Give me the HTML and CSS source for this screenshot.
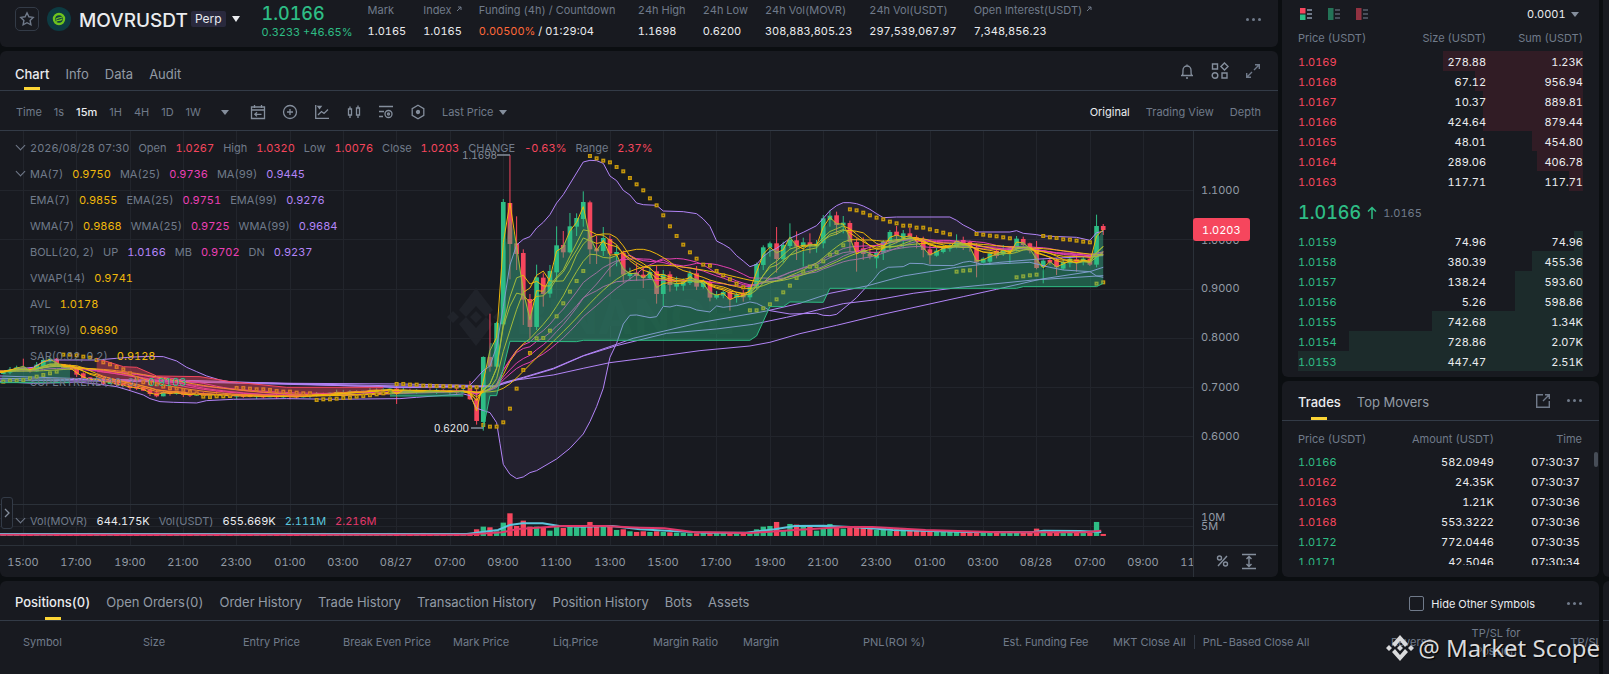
FILE: index.html
```html
<!DOCTYPE html>
<html lang="en">
  <head>
    <meta charset="utf-8">
    <title>MOVRUSDT Perp</title>
    <link rel="stylesheet" href="styles.css">
  </head>
  <body>
    <div class="layout">

      <div class="col-main">
        <header class="panel ticker">
          <button class="star" type="button" aria-label="Favorite">
            <svg width="16" height="16" viewBox="0 0 16 16"><path d="M8 1.800l1.900 4 4.300.6-3.100 3 .8 4.400L8 11.700l-3.900 2.100.8-4.400-3.100-3 4.300-.6z" fill="none" stroke="#707a8a" stroke-width="1.400"/></svg>
          </button>
          <svg class="coin" width="24" height="24" viewBox="0 0 24 24">
            <circle cx="12" cy="12" r="12" fill="#0d3b42"/>
            <circle cx="12" cy="12" r="5" fill="none" stroke="#6fc41e" stroke-width="2.400"/>
            <path d="M9 12.500c1-2.500 3-1 6-2.500M9 14.500c2-2 4 0 6-2.500" fill="none" stroke="#6fc41e" stroke-width="1.300"/>
          </svg>
          <h1>MOVRUSDT</h1>
          <span class="perp">Perp</span>
          <span class="caret big"></span>
          <div class="last">
            <div class="last-price">1.0166</div>
            <div class="last-change">0.3233 +46.65%</div>
          </div>
          <dl class="stats">
            <div><dt>Mark</dt><dd>1.0165</dd></div>
            <div><dt>Index <svg width="6" height="6" viewBox="0 0 6 6"><path d="M1 5l4-4M2 1h3v3" fill="none" stroke="#707a8a"/></svg></dt><dd>1.0165</dd></div>
            <div class="funding"><dt>Funding (4h) / Countdown</dt><dd><span class="orange">0.00500%</span> / 01:29:04</dd></div>
            <div><dt>24h High</dt><dd>1.1698</dd></div>
            <div><dt>24h Low</dt><dd>0.6200</dd></div>
            <div><dt>24h Vol(MOVR)</dt><dd>308,883,805.23</dd></div>
            <div><dt>24h Vol(USDT)</dt><dd>297,539,067.97</dd></div>
            <div><dt>Open Interest(USDT) <svg width="6" height="6" viewBox="0 0 6 6"><path d="M1 5l4-4M2 1h3v3" fill="none" stroke="#707a8a"/></svg></dt><dd>7,348,856.23</dd></div>
          </dl>
          <button class="dots" type="button" aria-label="More"><i></i><i></i><i></i></button>
        </header>

        <section class="panel chart">
          <nav class="tabs">
            <button class="tab active" type="button">Chart</button>
            <button class="tab" type="button">Info</button>
            <button class="tab" type="button">Data</button>
            <button class="tab" type="button">Audit</button>
            <div class="tab-icons">
              <button type="button" aria-label="Alerts"><svg width="16" height="16" viewBox="0 0 16 16"><path d="M2 12.500h12M3.500 12.500c.5-1 .5-3 .5-5.500a4 4 0 0 1 8 0c0 2.500 0 4.500.5 5.500M7 15h2M8 1.500V3" fill="none" stroke="#848e9c" stroke-width="1.300"/></svg></button>
              <button type="button" aria-label="Layout"><svg width="18" height="18" viewBox="0 0 18 18" fill="none" stroke="#848e9c" stroke-width="1.400"><path d="M1.500 2h5v5h-5zM11 11h5v5h-5zM13.500.9l3.600 3.600-3.600 3.600-3.600-3.600z"/><circle cx="4" cy="13.500" r="2.800"/></svg></button>
              <button type="button" aria-label="Expand"><svg width="16" height="16" viewBox="0 0 16 16" fill="none" stroke="#707a8a" stroke-width="1.400"><path d="M9 7l5-5M10 1.700h4.300V6M7 9l-5 5M1.700 10v4.300H6"/></svg></button>
            </div>
          </nav>
          <div class="toolbar">
            <span>Time</span>
            <button type="button">1s</button>
            <button class="active" type="button">15m</button>
            <button type="button">1H</button>
            <button type="button">4H</button>
            <button type="button">1D</button>
            <button type="button">1W</button>
            <span class="caret more"></span>
            <div class="tools">
              <svg width="16" height="16" viewBox="0 0 16 16"><path d="M1.500 3h13v11.500h-13zM1.500 6h13M4.500 1v3M11.500 1v3M11.500 10.300H5M7 8.200l-2.200 2.100L7 12.400"/></svg>
              <svg width="16" height="16" viewBox="0 0 16 16"><circle cx="8" cy="8" r="6.500"/><path d="M8 5v6M5 8h6"/></svg>
              <svg width="16" height="16" viewBox="0 0 16 16"><path d="M1.700 1v13.300H15M4 11l3.500-3.500 2.500 2 4-4M4 2.500h3L5.500 4.500z"/></svg>
              <svg width="16" height="16" viewBox="0 0 16 16"><path d="M2.500 5h3v6h-3zM10.500 4h3v7h-3zM4 2.500V5M4 11v3M12 1.500V4M12 11v3"/></svg>
              <svg width="16" height="16" viewBox="0 0 16 16"><path d="M1 2.500h14M1 7.500h5M1 12.500h4"/><circle cx="10.500" cy="10" r="3.500"/><circle cx="10.500" cy="10" r="1"/></svg>
              <svg width="16" height="16" viewBox="0 0 16 16"><path d="M8 1.200l5.800 3.400v6.800L8 14.800l-5.800-3.400V4.600z"/><circle cx="8" cy="8" r="1.500" fill="#848e9c"/></svg>
            </div>
            <label class="drop"><select aria-label="Price type"><option>Last Price</option></select><span class="caret"></span></label>
            <div class="views">
              <button class="current" type="button">Original</button>
              <button type="button">Trading View</button>
              <button type="button">Depth</button>
            </div>
          </div>

          <div class="canvas">
            <svg class="plot" viewBox="0 0 1278 446">
              <defs>
                <clipPath id="timeClip"><rect x="0" y="415" width="1193" height="31"/></clipPath>
              </defs>
              <g id="grid" stroke="#22252c" stroke-width="1"></g>
              <g class="brand">
                <g transform="translate(476 186)">
                  <path d="M-17 -7L0 -29 17 -7 10 0 0 -11 -10 0zM-17 7L0 29 17 7 10 0 0 11 -10 0zM0 -6l6 6-6 6-6-6zM-23 -6l6 6-6 6-6-6zM23 -6l6 6-6 6-6-6z"/>
                </g>
                <text x="516" y="203">BINANCE</text>
              </g>
              <!-- series coordinates are in thirds of a pixel -->
              <g id="series" transform="translate(0 -1) scale(.3333)"></g>
              <g stroke="#2b3139">
                <path d="M0 373.500H1278M0 414.500H1278M1193.500 0V446"/>
              </g>
              <g stroke="#848e9c" stroke-width="1.500"><path d="M497 24h13M471 297h12"/></g>
              <text class="mark dim" x="462" y="28">1.1698</text>
              <text class="mark" x="434" y="301">0.6200</text>
              <g class="axis">
                <text x="1201" y="63">1.1000</text>
                <text x="1201" y="113">1.0000</text>
                <text x="1201" y="161">0.9000</text>
                <text x="1201" y="210">0.8000</text>
                <text x="1201" y="260">0.7000</text>
                <text x="1201" y="309">0.6000</text>
                <text x="1201" y="390">10M</text>
                <text x="1201" y="399">5M</text>
              </g>
              <rect x="1193" y="87" width="57" height="23" rx="3" fill="#f6465d"/>
              <text class="tag" x="1202" y="103">1.0203</text>
              <g id="times" class="axis" text-anchor="middle" clip-path="url(#timeClip)"></g>
              <g fill="none" stroke="#848e9c" stroke-width="1.400">
                <path d="M1218 435l9-10"/><circle cx="1219.500" cy="427" r="2"/><circle cx="1225.500" cy="433" r="2"/>
                <path d="M1242 423.500h14M1242 437.500h14M1249 426v9M1246.500 428l2.500-2.500 2.500 2.500M1246.500 433l2.500 2.500 2.500-2.500"/>
              </g>
            </svg>

            <div class="legend">
              <div class="fold">2026/08/28 07:30 <span>Open</span> <b class="down">1.0267</b> <span>High</span> <b class="down">1.0320</b> <span>Low</span> <b class="down">1.0076</b> <span>Close</span> <b class="down">1.0203</b> <span>CHANGE</span> <b class="down">-0.63%</b> <span>Range</span> <b class="down">2.37%</b></div>
              <div class="fold">MA(7) <b class="c1">0.9750</b> <span>MA(25)</span> <b class="c2">0.9736</b> <span>MA(99)</span> <b class="c3">0.9445</b></div>
              <div>EMA(7) <b class="c1">0.9855</b> <span>EMA(25)</span> <b class="c2">0.9751</b> <span>EMA(99)</span> <b class="c3">0.9276</b></div>
              <div>WMA(7) <b class="c1">0.9868</b> <span>WMA(25)</span> <b class="c2">0.9725</b> <span>WMA(99)</span> <b class="c3">0.9684</b></div>
              <div>BOLL(20, 2) <span>UP</span> <b class="c3">1.0166</b> <span>MB</span> <b class="c2">0.9702</b> <span>DN</span> <b class="c3">0.9237</b></div>
              <div>VWAP(14) <b class="c1">0.9741</b></div>
              <div>AVL <b class="c1">1.0178</b></div>
              <div>TRIX(9) <b class="c1">0.9690</b></div>
              <div>SAR(0.02, 0.2) <b class="c1">0.9128</b></div>
              <div>SUPERTREND(10, 3) <b class="up">0.9103</b></div>
            </div>
            <div class="legend volume">
              <div class="fold">Vol(MOVR) <b class="white">644.175K</b> <span>Vol(USDT)</span> <b class="white">655.669K</b> <b class="cyan">2.111M</b> <b class="crimson">2.216M</b></div>
            </div>
            <button class="handle" type="button" aria-label="Show drawing tools"><svg width="6" height="10" viewBox="0 0 6 10"><path d="M1 1l4 4-4 4" fill="none" stroke="#848e9c" stroke-width="1.300"/></svg></button>
          </div>
        </section>
      </div>

      <div class="col-side">
        <section class="panel book">
          <div class="book-top">
            <button type="button" aria-label="Book"><svg width="12" height="12" viewBox="0 0 12 12"><path d="M0 0h5.500v5.500H0z" fill="#f6465d"/><path d="M0 6.500h5.500V12H0z" fill="#2ebd85"/><path d="M7 1h5v2H7zM7 5h5v2H7zM7 9h5v2H7z" fill="#707a8a"/></svg></button>
            <button class="faded" type="button" aria-label="Bids"><svg width="12" height="12" viewBox="0 0 12 12"><path d="M0 0h5.500v12H0z" fill="#2ebd85"/><path d="M7 1h5v2H7zM7 5h5v2H7zM7 9h5v2H7z" fill="#707a8a"/></svg></button>
            <button class="faded" type="button" aria-label="Asks"><svg width="12" height="12" viewBox="0 0 12 12"><path d="M0 0h5.500v12H0z" fill="#f6465d"/><path d="M7 1h5v2H7zM7 5h5v2H7zM7 9h5v2H7z" fill="#707a8a"/></svg></button>
            <label class="drop step"><select aria-label="Price step"><option>0.0001</option></select><span class="caret"></span></label>
          </div>
          <table class="orders asks">
            <thead><tr><th>Price (USDT)</th><th>Size (USDT)</th><th>Sum (USDT)</th></tr></thead>
            <tbody>
              <tr style="--depth: 49%"><td>1.0169</td><td>278.88</td><td>1.23K</td></tr>
              <tr style="--depth: 38%"><td>1.0168</td><td>67.12</td><td>956.94</td></tr>
              <tr style="--depth: 35%"><td>1.0167</td><td>10.37</td><td>889.81</td></tr>
              <tr style="--depth: 35%"><td>1.0166</td><td>424.64</td><td>879.44</td></tr>
              <tr style="--depth: 18%"><td>1.0165</td><td>48.01</td><td>454.80</td></tr>
              <tr style="--depth: 16%"><td>1.0164</td><td>289.06</td><td>406.78</td></tr>
              <tr style="--depth: 5%"><td>1.0163</td><td>117.71</td><td>117.71</td></tr>
            </tbody>
          </table>
          <div class="mid">
            <strong>1.0166</strong>
            <svg width="10" height="13" viewBox="0 0 10 13"><path d="M5 13V1.500M1 5.500l4-4 4 4" fill="none" stroke="#2ebd85" stroke-width="1.500"/></svg>
            <span>1.0165</span>
          </div>
          <table class="orders bids">
            <tbody>
              <tr style="--depth: 3%"><td>1.0159</td><td>74.96</td><td>74.96</td></tr>
              <tr style="--depth: 18%"><td>1.0158</td><td>380.39</td><td>455.36</td></tr>
              <tr style="--depth: 24%"><td>1.0157</td><td>138.24</td><td>593.60</td></tr>
              <tr style="--depth: 24%"><td>1.0156</td><td>5.26</td><td>598.86</td></tr>
              <tr style="--depth: 53%"><td>1.0155</td><td>742.68</td><td>1.34K</td></tr>
              <tr style="--depth: 82%"><td>1.0154</td><td>728.86</td><td>2.07K</td></tr>
              <tr style="--depth: 100%"><td>1.0153</td><td>447.47</td><td>2.51K</td></tr>
            </tbody>
          </table>
        </section>

        <section class="panel trades">
          <nav class="tabs">
            <button class="tab active" type="button">Trades</button>
            <button class="tab" type="button">Top Movers</button>
            <div class="tab-icons">
              <button type="button" aria-label="Pop out"><svg width="16" height="16" viewBox="0 0 16 16"><path d="M8 1.700H1.700v12.600h12.600V8M10 1.700h4.300V6M8 8l6-6" fill="none" stroke="#707a8a" stroke-width="1.400"/></svg></button>
              <button class="dots" type="button" aria-label="More"><i></i><i></i><i></i></button>
            </div>
          </nav>
          <div class="trade-list">
            <table class="orders">
              <thead><tr><th>Price (USDT)</th><th>Amount (USDT)</th><th>Time</th></tr></thead>
              <tbody>
                <tr><td class="up">1.0166</td><td>582.0949</td><td>07:30:37</td></tr>
                <tr><td class="down">1.0162</td><td>24.35K</td><td>07:30:37</td></tr>
                <tr><td class="down">1.0163</td><td>1.21K</td><td>07:30:36</td></tr>
                <tr><td class="down">1.0168</td><td>553.3222</td><td>07:30:36</td></tr>
                <tr><td class="up">1.0172</td><td>772.0446</td><td>07:30:35</td></tr>
                <tr><td class="up">1.0171</td><td>42.5046</td><td>07:30:34</td></tr>
              </tbody>
            </table>
            <span class="thumb"></span>
          </div>
        </section>
      </div>

      <div class="panel edge"></div>

      <section class="panel positions">
        <nav class="tabs">
          <button class="tab active" type="button">Positions(0)</button>
          <button class="tab" type="button">Open Orders(0)</button>
          <button class="tab" type="button">Order History</button>
          <button class="tab" type="button">Trade History</button>
          <button class="tab" type="button">Transaction History</button>
          <button class="tab" type="button">Position History</button>
          <button class="tab" type="button">Bots</button>
          <button class="tab" type="button">Assets</button>
          <div class="tab-icons">
            <label class="hide"><input type="checkbox"> Hide Other Symbols</label>
            <button class="dots" type="button" aria-label="More"><i></i><i></i><i></i></button>
          </div>
        </nav>
        <table class="pos-table">
          <colgroup>
            <col class="w120"><col class="w100"><col class="w100"><col class="w110"><col class="w100"><col class="w100">
            <col class="w90"><col class="w120"><col class="w140"><col class="w110"><col class="w278"><col class="w60"><col class="w90"><col class="w90">
          </colgroup>
          <thead>
            <tr>
              <th>Symbol</th><th>Size</th><th>Entry Price</th><th>Break Even Price</th><th>Mark Price</th><th>Liq.Price</th>
              <th>Margin Ratio</th><th>Margin</th><th>PNL(ROI %)</th><th>Est. Funding Fee</th>
              <th><a href="#">MKT Close All</a><a class="split" href="#">PnL-Based Close All</a></th>
              <th>Reverse</th><th class="center">TP/SL for<br>Position</th><th class="center">TP/SL</th>
            </tr>
          </thead>
        </table>
      </section>

      <div class="panel edge bottom"></div>
    </div>

    <div class="credit">
      <svg width="28" height="28" viewBox="-14 -14 28 28"><path d="M-8 -4L0 -13 8 -4 5 -1 0 -7 -5 -1zM-8 4L0 13 8 4 5 1 0 7 -5 1zM0 -3l3 3-3 3-3-3zM-11 -3l3 3-3 3-3-3zM11 -3l3 3-3 3-3-3z" fill="#d9dadc"/></svg>
      <span>@ Market Scope</span>
    </div>

    <script src="chart.js"></script>
  </body>
</html>
```
FILE: styles.css
```css
* {
  box-sizing: border-box;
}
body {
  margin: 0;
  height: 100vh;
  overflow: hidden;
  background-color: #0b0e11;
  color: #eaecef;
  font-family: Inter, "Liberation Sans", sans-serif;
  font-size: 11px;
  font-variant-numeric: tabular-nums;
  line-height: 16px;
}
button {
  background: none;
  border: 0;
  padding: 0;
  margin: 0;
  font: inherit;
  font-variant-numeric: inherit;
  color: inherit;
  cursor: pointer;
}
svg {
  display: block;
}
.layout {
  display: grid;
  grid-template-columns: minmax(0, 1fr) 317px 6px;
  grid-template-rows: auto 1fr;
  gap: 4px;
  min-height: 100vh;
}
.panel {
  background-color: #181a20;
  border-radius: 6px;
}
.col-main,
.col-side {
  display: flex;
  flex-direction: column;
  gap: 4px;
  min-width: 0;
}
.up { color: #2ebd85; }
.down { color: #f6465d; }
.orange { color: #ff6838; }

.caret {
  border: 4px solid transparent;
  border-top: 5px solid #848e9c;
  border-bottom: 0;
}
.caret.big {
  border-top: 6px solid #eaecef;
}
.dots {
  display: flex;
  gap: 3px;
}
.dots i {
  width: 3px;
  height: 3px;
  border-radius: 50%;
  background-color: #707a8a;
}

/* ticker */
.ticker {
  display: flex;
  height: 47px;
  padding: 0 17px 0 15px;
  border-radius: 0 0 6px 6px;
}
.star {
  display: flex;
  align-items: center;
  justify-content: center;
  width: 24px;
  height: 24px;
  margin: 7px 8px 0 0;
  border: 1px solid #333b47;
  border-radius: 5px;
}
.coin {
  margin: 7px 8px 0 0;
}
.ticker h1 {
  margin: 9px 0 0;
  font-size: 19px;
  font-weight: 500;
  line-height: 24px;
}
.perp {
  height: 16px;
  margin: 11px 6px 0 3px;
  padding: 0 4px;
  border-radius: 2px;
  background-color: #29293d;
  font-size: 12px;
}
.ticker .caret {
  height: 6px;
  margin: 16px 22px 0 0;
}
.last {
  margin-right: 15px;
  color: #2ebd85;
}
.last-price {
  font-size: 18px;
  font-weight: 500;
  line-height: 20px;
  margin: 4px 0 0;
}
.stats {
  display: flex;
  gap: 17px;
  margin: 2px 0 0;
  white-space: nowrap;
}
.stats .funding {
  min-width: 142px;
}
.stats dt {
  display: flex;
  gap: 4px;
  color: #707a8a;
}
.stats dt svg {
  margin-top: 4px;
}
.stats dd {
  margin: 5px 0 0;
}
.ticker .dots {
  margin: 18px 0 0 auto;
}

/* tabs */
.tabs {
  display: flex;
  align-items: center;
  gap: 16px;
  height: 40px;
  padding: 6px 17px 0 15px;
  border-bottom: 1px solid #333b47;
}
.tab {
  position: relative;
  height: 33px;
  font-size: 13px;
  color: #929aa5;
  white-space: nowrap;
}
.tab.active {
  color: #eaecef;
  font-weight: 500;
}
.tab.active::after {
  content: "";
  position: absolute;
  left: 50%;
  bottom: 0;
  width: 16px;
  height: 3px;
  margin-left: -8px;
  background-color: #fcd535;
}
.tab-icons {
  display: flex;
  align-items: center;
  gap: 16px;
  margin-left: auto;
}
.chart .tab-icons {
  margin-top: -6px;
}

/* toolbar */
.toolbar {
  display: flex;
  align-items: center;
  gap: 12px;
  height: 40px;
  padding: 3px 17px 0 16px;
  border-bottom: 1px solid #333b47;
  color: #707a8a;
  font-variant-numeric: normal;
}
.toolbar .active {
  color: #eaecef;
  font-weight: 500;
}
.toolbar .more {
  margin: 0 9px 0 8px;
}
.tools {
  display: flex;
  gap: 16px;
  margin-right: 4px;
}
.tools svg {
  fill: none;
  stroke: #848e9c;
  stroke-width: 1.3;
}
.drop {
  display: flex;
  align-items: center;
  gap: 5px;
}
.drop select {
  appearance: none;
  border: 0;
  padding: 0;
  background: none;
  color: inherit;
  font: inherit;
}
.views {
  display: flex;
  gap: 16px;
  margin-left: auto;
}
.views .current {
  color: #eaecef;
}

/* chart */
.chart {
  overflow: hidden;
}
.canvas {
  position: relative;
}
.plot {
  width: 100%;
}
.plot text {
  font-size: 11px;
}
.axis text {
  fill: #929aa5;
}
.plot .mark {
  fill: #eaecef;
  font-size: 10px;
}
.plot .mark.dim {
  fill: #848e9c;
}
.plot .tag {
  fill: #ffffff;
}
.brand {
  fill: #20232a;
}
.plot .brand text {
  fill: #1b1e24;
  font-size: 48px;
  font-weight: 700;
}
.legend {
  position: absolute;
  top: 4px;
  left: 30px;
  color: #707a8a;
  line-height: 26px;
  white-space: nowrap;
}
.legend.volume {
  top: 377px;
}
.legend div {
  display: flex;
  gap: 9px;
}
.legend b {
  font-weight: 400;
}
.legend .fold::before {
  content: "";
  position: absolute;
  left: -13px;
  width: 6px;
  height: 6px;
  margin-top: 7px;
  border: solid #707a8a;
  border-width: 0 1px 1px 0;
  transform: rotate(45deg);
}
.c1 { color: #f0b90b; }
.c2 { color: #eb40b5; }
.c3 { color: #b385f8; }
.white { color: #eaecef; }
.cyan { color: #5bc5dc; }
.crimson { color: #e0386a; }
.handle {
  position: absolute;
  left: 1px;
  top: 366px;
  display: flex;
  align-items: center;
  justify-content: center;
  width: 12px;
  height: 32px;
  border: 1px solid #333b47;
  border-radius: 3px;
  background-color: #181a20;
}

/* order book */
.book {
  padding: 7px 16px 6px;
  border-radius: 0 0 6px 6px;
}
.book-top {
  display: flex;
  align-items: center;
  gap: 16px;
  height: 14px;
  padding-left: 2px;
}
.faded {
  opacity: 0.55;
}
.step {
  margin-left: auto;
  padding-right: 4px;
}
.orders {
  width: 100%;
  table-layout: fixed;
  border-collapse: collapse;
}
.orders th {
  height: 30px;
  padding: 4px 0 0;
  font-weight: 400;
  color: #707a8a;
  text-align: right;
}
.orders td {
  height: 20px;
  padding: 2px 0 0;
  text-align: right;
}
.orders th:first-child,
.orders td:first-child {
  width: 32%;
  text-align: left;
}
.orders th:nth-child(2),
.orders td:nth-child(2) {
  width: 34%;
}
.asks tbody tr {
  background: linear-gradient(to left, #311c25 var(--depth), transparent 0);
}
.bids tbody tr {
  background: linear-gradient(to left, #1c2b2b var(--depth), transparent 0);
}
.asks td:first-child { color: #f6465d; }
.bids td:first-child { color: #2ebd85; }
.mid {
  display: flex;
  align-items: center;
  gap: 6px;
  height: 40px;
  padding-top: 3px;
  color: #707a8a;
}
.mid strong {
  font-size: 18px;
  font-weight: 500;
  color: #2ebd85;
}

/* trades */
.trades .tabs {
  padding-left: 16px;
}
.trades .tab,
.positions .tab {
  padding-bottom: 3px;
}
.trades .tab-icons {
  margin-top: -6px;
}
.trade-list {
  position: relative;
  height: 144px;
  margin: 0 0 12px;
  padding: 0 17px 0 16px;
  overflow: hidden;
}
.trade-list th {
  padding-top: 6px;
}
.trade-list th:nth-child(2),
.trade-list td:nth-child(2) {
  width: 37%;
}
.trade-list td:last-child {
  padding-right: 2px;
}
.thumb {
  position: absolute;
  right: 1px;
  top: 31px;
  width: 4px;
  height: 15px;
  border-radius: 2px;
  background-color: #474d57;
}

/* positions */
.positions {
  grid-column: 1 / 3;
  overflow: hidden;
  border-radius: 6px 6px 0 0;
}
.hide {
  display: flex;
  align-items: center;
  gap: 7px;
  margin-right: 16px;
}
.hide input {
  appearance: none;
  width: 15px;
  height: 15px;
  margin: 0;
  border: 1px solid #707a8a;
  border-radius: 2px;
}
.pos-table {
  width: 1608px;
  margin-left: 23px;
  table-layout: fixed;
  border-collapse: collapse;
}
.pos-table th {
  height: 42px;
  padding: 0;
  font-weight: 400;
  color: #707a8a;
  text-align: left;
  line-height: 18px;
  white-space: nowrap;
}
.pos-table a {
  color: inherit;
  text-decoration: none;
}
.pos-table .split {
  margin-left: 8px;
  padding-left: 8px;
  border-left: 1px solid #333b47;
}
.pos-table .center {
  text-align: center;
}
.w60 { width: 60px; }
.w90 { width: 90px; }
.w100 { width: 100px; }
.w110 { width: 110px; }
.w120 { width: 120px; }
.w140 { width: 140px; }
.w278 { width: 278px; }
.edge {
  border-radius: 0 0 0 6px;
}
.edge.bottom {
  border-radius: 6px 0 0 0;
  background: linear-gradient(#333b47, #333b47) 0 39px / 100% 1px no-repeat #181a20;
}

/* author mark over the table */
.credit {
  position: absolute;
  right: 9px;
  bottom: 8px;
  display: flex;
  align-items: center;
  gap: 4px;
  color: #d9dadc;
  font-family: "Noto Sans", sans-serif;
  font-size: 24px;
  line-height: 36px;
  text-shadow: 1px 1px 1px #000000;
}
```
FILE: chart.js
```js
var STEP = 20;
var FIRST = 10;
var UP = "#2ebd85", DOWN = "#f6465d";
var ORANGE = "#f0b90b", PINK = "#e33fb0", PURPLE = "#b385f8";

var quiet = [
  726,720,714,716,722,706,692,688,704,712,716,732,744,750,748,760,757,762,766,772,
  774,780,790,797,788,790,787,792,795,792,796,794,797,796,798,795,798,799,798,800,
  799,800,798,799,800,797,795,793,794,790,789,788,786,785,784,783,782,780,778,784,
  782,784,782,784,785,783,785,784,786,785
];

// up?, high, body top, body bottom, low
var active = [
  [0,753,770,808,810],[0,770,808,873,884],[1,679,681,876,902],[0,551,681,710,725],[1,575,579,710,712],
  [1,207,216,583,590],[0,75,219,342,448],[0,259,340,372,420],[0,358,369,509,585],[0,492,507,591,625],
  [1,404,442,591,600],[0,430,443,492,530],[1,405,423,491,503],[1,289,346,427,455],[0,303,345,367,383],
  [1,249,289,367,370],[1,250,264,290,318],[1,184,216,267,290],[0,212,217,358,402],[0,318,356,364,402],
  [1,291,324,363,378],[0,316,327,371,440],[1,345,366,374,409],[0,362,368,434,458],[1,413,429,438,450],
  [0,400,428,438,453],[0,412,434,444,474],[1,410,426,445,450],[0,406,424,492,521],[1,420,433,492,528],
  [0,424,433,465,485],[1,440,460,470,482],[1,445,456,467,482],[1,422,430,459,465],[0,408,430,470,480],
  [1,448,456,471,476],[0,450,456,503,514],[1,483,495,503,508],[1,480,486,497,505],[0,478,485,508,542],
  [1,488,494,503,518],[0,480,490,502,515],[1,462,470,502,510],[1,398,402,470,478],[1,346,352,405,420],
  [1,335,340,353,380],[0,291,340,387,428],[1,335,345,388,398],[1,280,330,348,355],[0,304,331,350,390],
  [1,323,337,350,410],[0,310,337,348,370],[1,330,341,348,368],
  [1,255,265,340,355],[1,240,257,270,290],[0,245,256,285,315],[1,258,278,286,310],[0,272,279,336,365],
  [0,325,336,366,425],[0,322,355,372,390],[0,345,372,380,388],[1,358,367,385,415],[1,330,335,368,390],
  [1,300,306,338,360],[0,288,305,318,340],[1,300,310,326,355],[0,293,310,322,338],[0,316,322,332,355],
  [0,320,332,360,382],[0,346,358,376,402],[1,353,362,377,380],[1,345,350,366,370],[1,340,346,356,365],
  [1,313,332,350,355],[0,320,330,342,360],[0,332,336,354,365],[0,340,353,397,442],[1,382,386,398,400],
  [1,365,370,395,405],[0,355,362,378,385],[1,345,360,372,378],[1,350,355,366,400],[1,318,326,358,365],
  [0,320,327,345,350],[0,338,340,362,370],[0,333,352,414,418],[1,388,392,412,460],[0,382,390,398,405],
  [0,385,390,412,435],[1,390,396,416,420],[1,378,386,400,412],[0,374,388,398,425],[1,380,386,396,406],
  [0,382,386,404,408],[1,254,288,404,412],[0,282,288,300,315]
];

var sar = [
  755,752,752,750,745,740,735,730,725,674,674,676,680,683,690,697,703,711,718,730,745,757,760,763,770,775,
  776,780,786,790,800,801,799,799,798,774,774,776,778,778,780,783,785,785,788,790,790,810,808,808,806,804,
  803,800,798,796,793,790,787,762,762,764,764,767,767,768,769,769,770,771,772,772,
  885,890,890,877,836,776,720,669,625,624,602,559,520,485,453,423,
  78,85,92,97,111,124,144,163,181,205,226,256,289,318,344,367,386,404,407,423,436,448,461,472,
  541,541,535,523,508,487,467,444,425,410,409,394,374,367,346,
  238,241,248,256,263,268,275,280,287,287,293,293,298,303,308,313,425,422,421,
  312,314,317,319,322,325,442,439,436,434,318,322,324,328,329,332,335,337,461,457
];

var bollUp = "0,728 40,718 100,712 130,695 160,690 290,690 350,685 400,681 450,679 490,680 530,693 560,712 590,725 620,738 660,750 700,757 880,760 1200,762 1410,766 1430,744 1450,722 1470,708 1490,650 1510,530 1530,405 1550,345 1570,328 1590,320 1610,294 1630,277 1650,254 1670,219 1690,194 1750,96 1770,91 1790,92 1810,100 1830,138 1850,152 1870,181 1890,195 1910,219 1930,224 1970,226 1990,243 2050,245 2090,251 2110,267 2130,289 2150,333 2170,343 2190,355 2210,377 2230,393 2250,410 2270,403 2290,380 2310,364 2330,355 2350,340 2370,325 2390,316 2410,307 2450,287 2470,265 2490,242 2510,227 2530,218 2550,218 2570,221 2590,228 2610,238 2630,251 2650,263 2690,261 2850,261 2870,271 2890,285 2910,295 2930,306 3030,306 3050,302 3070,310 3110,314 3130,318 3230,322 3270,331 3290,308 3310,304";
var bollDown = "0,755 100,760 190,758 230,756 290,762 350,770 390,782 430,795 450,806 480,815 520,817 590,819 620,812 700,808 860,806 1000,808 1200,806 1250,802 1390,792 1410,797 1430,835 1470,848 1490,878 1500,940 1510,1003 1530,1033 1550,1046 1570,1041 1590,1028 1610,1022 1670,987 1710,955 1750,912 1770,875 1790,830 1810,775 1830,682 1850,640 1870,582 1890,556 1910,555 1950,563 1970,560 1990,529 2010,531 2030,526 2070,532 2090,540 2130,546 2150,528 2170,532 2210,527 2250,516 2270,520 2290,530 2310,542 2370,552 2450,550 2470,556 2490,557 2510,553 2550,520 2570,503 2600,470 2620,450 2640,425 2665,412 2710,410 2730,400 2770,401 2790,406 2860,407 2890,397 2910,394 2950,404 3090,397 3150,412 3190,420 3270,425 3290,438 3310,442";

var slow = [
  "0,745 600,755 1200,768 1490,768 1550,750 1660,735 1750,715 1830,698 1970,680 2100,662 2250,648 2310,637 2400,611 2510,586 2630,557 2730,535 2890,500 2990,478 3120,448 3270,425 3310,412",
  "0,750 600,757 1200,771 1490,768 1510,758 1570,742 1660,715 1750,677 1850,643 1900,625 2100,578 2300,543 2400,520 2490,490 2600,468 2710,438 2870,412 3000,397 3120,387 3310,377",
  "0,738 300,748 600,752 1200,773 1490,770 1510,760 1570,744 1660,717 1750,678 1850,647 2000,610 2150,597 2260,583 2360,562 2400,553 2530,521 2640,508 2740,490 2880,472 3100,450 3310,437"
];

var volumes = [
  6,20,28,26,14,40,68,30,46,28,28,24,16,32,24,28,26,30,42,30,28,30,18,20,14,12,14,12,14,12,11,10,9,8,8,8,8,10,9,8,8,9,
  9,20,28,30,42,18,36,34,33,28,16,24,36,28,22,28,30,30,24,18,26,16,24,24,17,20,16,18,14,14,12,12,13,12,12,13,12,14,
  10,14,11,11,10,22,18,12,10,11,10,12,9,10,42,6
];

var series = document.getElementById("series");

function draw(tag, attrs, parent) {
  var el = document.createElementNS("http://www.w3.org/2000/svg", tag);
  for (var key in attrs) el.setAttribute(key, attrs[key]);
  (parent || series).appendChild(el);
  return el;
}

function line(points, color, width) {
  draw("polyline", { points: points, fill: "none", stroke: color, "stroke-width": width || 3, "stroke-linejoin": "round" });
}

function plot(values, color) {
  var points = values.map(function (v, i) { return (FIRST + i * STEP) + "," + v.toFixed(1); });
  line("0," + values[0] + " " + points.join(" "), color);
}

function sma(values, n) {
  return values.map(function (v, i) {
    var part = values.slice(Math.max(0, i - n + 1), i + 1);
    return part.reduce(function (a, b) { return a + b; }) / part.length;
  });
}

function ema(values, n) {
  var k = 2 / (n + 1), last = values[0];
  return values.map(function (v) {
    last = v * k + last * (1 - k);
    return last;
  });
}

function wma(values, n) {
  return values.map(function (v, i) {
    var sum = 0, weight = 0;
    for (var j = 0; j < n && i - j >= 0; j++) {
      sum += values[i - j] * (n - j);
      weight += n - j;
    }
    return sum / weight;
  });
}

function reversed(points) {
  return points.split(" ").reverse().join(" ");
}

// quiet hours only have closes, so build the bodies from neighbours
var candles = quiet.map(function (close, i) {
  var open = i ? quiet[i - 1] : 730;
  var top = Math.min(open, close) - 2, bottom = Math.max(open, close) + 2;
  return [close < open ? 1 : 0, top - (i * 7) % 9, top, bottom, bottom + (i * 5) % 8];
});
candles[3][1] = 686;
candles[59][4] = 822;
candles = candles.concat(active);

var closes = candles.map(function (c) { return c[0] ? c[2] : c[3]; });
var average = candles.map(function (c, i) { return (c[1] + c[4] + closes[i]) / 3; });
average[76] = 219;

// grid and time labels
var grid = document.getElementById("grid");
var times = document.getElementById("times");
var labels = ["15:00","17:00","19:00","21:00","23:00","01:00","03:00","08/27","07:00","09:00","11:00","13:00","15:00","17:00","19:00","21:00","23:00","01:00","03:00","08/28","07:00","09:00","11:00"];
labels.forEach(function (label, i) {
  var x = Math.round(23 + i * 53.33);
  if (x < 1193) draw("path", { d: "M" + (x + 0.5) + " 0V414" }, grid);
  draw("text", { x: x, y: 435 }, times).textContent = label;
});
[59, 108, 158, 207, 256, 305, 387, 395].forEach(function (y) {
  draw("path", { d: "M0 " + (y + 0.5) + "H1193" }, grid);
});

// bollinger band area
draw("polygon", { points: bollUp + " " + reversed(bollDown), fill: "#b385f8", "fill-opacity": 0.07 });

candles.forEach(function (c, i) {
  var x = FIRST + i * STEP, color = c[0] ? UP : DOWN;
  draw("rect", { x: x - 1.5, y: c[1], width: 3, height: c[4] - c[1], fill: color });
  draw("rect", { x: x - 7, y: c[2], width: 14, height: c[3] - c[2], fill: color });
});

line(bollUp, PURPLE);
line(bollDown, PURPLE);
slow.forEach(function (points) { line(points, PURPLE); });
plot(sma(closes, 25), PINK);
plot(ema(closes, 25), PINK);
plot(wma(closes, 25), PINK);
plot(sma(closes, 20), PINK);
plot(sma(closes, 7), ORANGE);
plot(ema(closes, 7), ORANGE);
plot(wma(closes, 7), ORANGE);
plot(sma(average, 14), ORANGE);
plot(ema(ema(ema(closes, 9), 9), 9), ORANGE);
plot(average, ORANGE);

sar.forEach(function (y, i) {
  draw("rect", { x: FIRST + i * STEP - 4, y: y - 4, width: 8, height: 8, fill: "#6b5312", stroke: "#c8990d", "stroke-width": 4 });
});

// supertrend: shade between the band and the middle of each candle
function trend(points, from, to, color) {
  var middle = [];
  for (var i = to; i >= from; i--) {
    middle.push((FIRST + i * STEP) + "," + (candles[i][1] + candles[i][4]) / 2);
  }
  draw("polygon", { points: points + " " + middle.join(" "), fill: color, "fill-opacity": 0.4 });
  line(points, color);
}
trend("0,758 210,758", 0, 10, UP);
trend("290,685 370,710 410,712 470,738 600,740 690,755 860,772 1150,772", 14, 57, DOWN);
trend("1170,798 1390,798", 58, 69, UP);
trend("1450,895 1470,797 1490,797 1530,634 1730,635 1750,631 2250,631 2270,618 2310,530 2350,530 2370,516 2470,517 2490,475 3050,475 3070,470 3290,470 3310,460", 72, 165, UP);

// volume
candles.forEach(function (c, i) {
  var h = i < 70 ? 5 + (i * 3) % 5 : volumes[i - 70];
  draw("rect", { x: FIRST + i * STEP - 8, y: 1218 - h, width: 16, height: h, fill: c[0] ? UP : DOWN });
});
line("0,1212 1400,1212 1494,1200 1530,1185 1567,1180 1628,1180 1678,1188 1739,1190 1837,1188 1920,1198 2103,1208 2238,1208 2324,1198 2385,1188 2471,1187 2569,1192 2679,1200 2900,1206 3095,1207 3132,1202 3242,1203 3304,1206", "#5bc5dc", 6);
line("0,1214 1400,1214 1506,1207 1555,1197 1690,1188 1812,1188 1920,1193 1993,1195 2079,1206 2250,1209 2385,1200 2532,1191 2618,1191 2777,1200 2997,1207 3255,1207 3304,1202", "#e0386a", 6);
```
